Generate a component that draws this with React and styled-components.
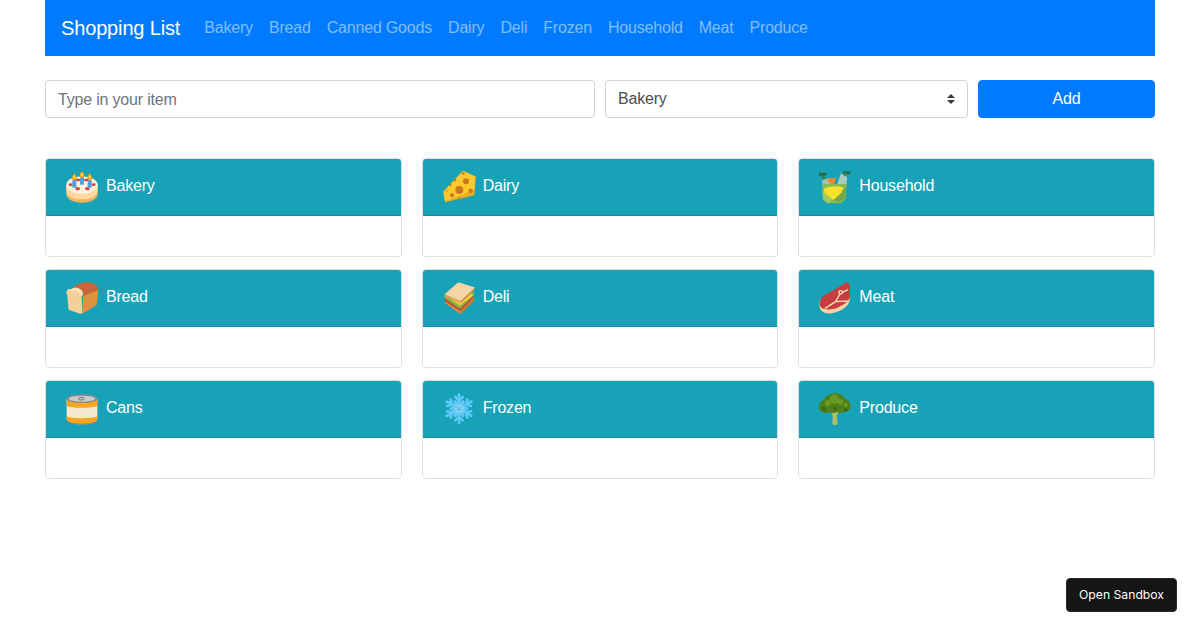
import React from 'react';
import styled, { createGlobalStyle } from 'styled-components';

const GlobalStyle = createGlobalStyle`
  * { box-sizing: border-box; }
  html, body { margin: 0; padding: 0; background: #fff; }
  body {
    font-family: "Liberation Sans", Arial, sans-serif;
    font-size: 16px;
    line-height: 1.5;
    letter-spacing: -0.19px;
    color: #212529;
  }
`;

const Container = styled.div`
  width: 1110px;
  margin: 0 auto;
`;

const Navbar = styled.nav`
  display: flex;
  align-items: center;
  height: 56px;
  padding: 8px 16px;
  background-color: #007bff;
`;

const Brand = styled.a`
  margin-right: 16px;
  font-size: 20px;
  line-height: 30px;
  letter-spacing: -0.15px;
  color: #fff;
`;

const NavLink = styled.a`
  padding: 8px;
  color: rgba(255, 255, 255, 0.5);
`;

const ItemForm = styled.form`
  display: grid;
  grid-template-columns: 550px 363px 177px;
  gap: 10px;
  margin-top: 24px;
`;

const fieldStyles = `
  height: 38px;
  border: 1px solid #ced4da;
  border-radius: 4px;
  font-family: inherit;
  font-size: 16px;
  line-height: 1.5;
  letter-spacing: inherit;
  color: #495057;
  background-color: #fff;
`;

const ItemInput = styled.input`
  ${fieldStyles}
  padding: 7px 12px 5px;
  &::placeholder { color: #6c757d; opacity: 1; }
`;

const CategorySelect = styled.select`
  ${fieldStyles}
  padding: 6px 28px 6px 12px;
  appearance: none;
  background: #fff url("data:image/svg+xml,%3csvg xmlns='http://www.w3.org/2000/svg' width='4' height='5' viewBox='0 0 4 5'%3e%3cpath fill='%23343a40' d='M2 0L0 2h4zm0 5L0 3h4z'/%3e%3c/svg%3e") no-repeat right 12px center / 8px 10px;
`;

const AddButton = styled.button`
  height: 38px;
  border: 1px solid #007bff;
  border-radius: 4px;
  background-color: #007bff;
  color: #fff;
  font-family: inherit;
  font-size: 16px;
  letter-spacing: inherit;
`;

const CardGrid = styled.div`
  display: grid;
  grid-template-columns: repeat(3, 1fr);
  grid-auto-flow: column;
  grid-template-rows: repeat(3, auto);
  column-gap: 20px;
  row-gap: 12px;
  margin-top: 40px;
`;

const Card = styled.section`
  border: 1px solid rgba(0, 0, 0, 0.125);
  border-radius: 4px;
  overflow: hidden;
`;

const CardHeader = styled.header`
  display: flex;
  align-items: center;
  height: 57px;
  padding: 11px 20px 13px;
  background-color: #17a2b8;
  border-bottom: 1px solid rgba(0, 0, 0, 0.125);
  color: #fff;
`;

const CardBody = styled.div`
  height: 40px;
  background: #fff;
`;

const IconBox = styled.svg`
  flex: none;
  display: block;
  width: 40px;
  height: 32px;
  margin-top: 2px;
  overflow: visible;
`;

const SandboxButton = styled.a`
  position: fixed;
  right: 23px;
  bottom: 18px;
  display: flex;
  align-items: center;
  justify-content: center;
  width: 111px;
  height: 34px;
  border: 1px solid #2a2a2a;
  border-radius: 4px;
  background: #151515;
  color: #fff;
  font-family: Inter, sans-serif;
  font-size: 12.2px;
  letter-spacing: 0;
`;

// emoji drawn in the coordinates of a 3x crop of the picture
const Cake = () => (
  <IconBox viewBox="63 63 120 96">
    <path d="M64 106v26c0 16 20 26 47 26s47-10 47-26v-26z" fill="#f7b55a" />
    <path d="M64 106v16c0 16 20 26 47 26s47-10 47-26v-16z" fill="#fdd8a2" />
    <ellipse cx="111" cy="105" rx="47" ry="26" fill="#fff1da" />
    <g fill="#d8404a">
      <ellipse cx="77" cy="104" rx="6" ry="4" />
      <ellipse cx="99" cy="90" rx="7" ry="4" />
      <ellipse cx="124" cy="90" rx="7" ry="4" />
      <ellipse cx="146" cy="104" rx="6" ry="4" />
      <ellipse cx="98" cy="116" rx="7" ry="5" />
      <ellipse cx="127" cy="116" rx="7" ry="5" />
    </g>
    <g fill="#4f9fe0">
      <rect x="82" y="90" width="12" height="23" rx="2" />
      <rect x="105" y="82" width="12" height="22" rx="2" />
      <rect x="128" y="90" width="12" height="23" rx="2" />
    </g>
    <g fill="#f59e0b">
      <path d="M88 70c5 6 8 11 7 16-1 5-13 5-14 0-1-5 3-10 7-16z" />
      <path d="M111 63c5 6 8 11 7 16-1 5-13 5-14 0-1-5 3-10 7-16z" />
      <path d="M134 70c5 6 8 11 7 16-1 5-13 5-14 0-1-5 3-10 7-16z" />
    </g>
    <g fill="#ffd54f">
      <ellipse cx="88" cy="81" rx="3.5" ry="5" />
      <ellipse cx="111" cy="74" rx="3.5" ry="5" />
      <ellipse cx="134" cy="81" rx="3.5" ry="5" />
    </g>
  </IconBox>
);

const Cheese = () => (
  <IconBox viewBox="39 33 120 96">
    <path d="M40 95L98 34q4-1 8 1l31 15-4 56-88 21z" fill="#f0ae1c" />
    <path d="M40 95L98 34q4-1 8 1l31 15-4 40-88 34z" fill="#f9c92e" />
    <g fill="#c9791c">
      <circle cx="88" cy="90" r="12" />
      <circle cx="108" cy="64" r="9" />
      <circle cx="122" cy="93" r="7" />
      <circle cx="66" cy="106" r="6" />
      <circle cx="75" cy="60" r="4" />
      <circle cx="61" cy="75" r="3.5" />
      <circle cx="50" cy="93" r="2.5" />
      <circle cx="100" cy="40" r="4" />
      <circle cx="88" cy="113" r="2.5" />
    </g>
  </IconBox>
);

const Groceries = () => (
  <IconBox viewBox="42 33 120 96">
    <path d="M54 40l20 34-10 4-18-34z" fill="#3b7d4f" />
    <path d="M42 38h22v9H42zM114 34h22v9h-22z" fill="#2a6a45" />
    <path d="M126 40l-16 36-10-4 18-36z" fill="#3b7d4f" />
    <path d="M52 60l20-6 14 24-34 6z" fill="#9fc4bb" />
    <path d="M94 80l14-40 18 12-2 30z" fill="#a9cbbd" />
    <path d="M66 56l28-3-12 32z" fill="#ef8a2b" />
    <path d="M52 72h72l-2 44-14 14H68l-14-12z" fill="#86ba4e" />
    <path d="M68 130l-14-12-2-30 32 30z" fill="#a2cc5c" />
    <path d="M56 88c8-10 54-12 60-4l-6 14-24 22-26-20z" fill="#f8e02c" />
    <path d="M86 120l24-22 6-14 6 4-4 26-12 12z" fill="#72a648" />
  </IconBox>
);

const Bread = () => (
  <IconBox viewBox="33 21 120 96">
    <path d="M50 42C60 28 85 20 100 22c18 2 32 12 30 26l-45 20z" fill="#c4673a" />
    <path d="M84 64l46-18-5 44-43 26z" fill="#dc933e" />
    <path d="M50 42c10-8 24-3 31 6 4 6 3 12-1 16l2 46c0 5-3 7-7 6l-30-10c-4-2-5-4-5-8l-3-38c-5-5-4-13 3-18z" fill="#f3d09a" />
    <path d="M50 42c10-8 24-3 31 6 4 6 3 12-1 16-6-10-18-20-33-16z" fill="#f9e2bb" />
    <ellipse cx="95" cy="31" rx="8" ry="2.5" fill="#e4503f" />
  </IconBox>
);

const Sandwich = () => (
  <IconBox viewBox="39 21 120 96">
    <path d="M46 84l44 33 42-40v-12L46 76z" fill="#e08d39" />
    <path d="M90 104l42-40v13l-42 40z" fill="#cc7a2b" />
    <path d="M44 78l46 30 42-42-84 2z" fill="#b94a3d" />
    <path d="M42 68l48 34 44-44-4-6-86 6z" fill="#84b53f" />
    <path d="M58 70l32 22 20-16-26-14z" fill="#f7c93c" />
    <path d="M104 72l20-16 6 4-20 18z" fill="#f7c93c" />
    <path d="M44 58l38-34q4-2 8-1l43 14c1 1 1 2 0 3L92 78z" fill="#f5d5a6" />
    <path d="M44 58l48 20v7L44 64z" fill="#dfa262" />
    <path d="M92 78l41-38v6L92 85z" fill="#d5934f" />
  </IconBox>
);

const Steak = () => (
  <IconBox viewBox="42 21 120 96">
    <path d="M43 90c0-4 1-10 3-14l89-8c0 20-16 34-42 44-24 8-50 2-50-22z" fill="#fad3a6" />
    <path d="M44 88c0-14 10-26 24-33 20-10 36-20 52-31 8-4 15 1 15 12v30c-3 12-18 24-40 33-22 8-51 6-51-11z" fill="#c43f3d" />
    <path d="M60 100l32-20 13-24 24-12M92 80l36-2" fill="none" stroke="#f8dcc0" strokeWidth="4" />
    <circle cx="107" cy="52" r="7" fill="#f8dcc0" />
    <circle cx="107" cy="52" r="3" fill="#b9393a" />
  </IconBox>
);

const TinCan = () => (
  <IconBox viewBox="33 24 120 96">
    <path d="M35 42h92v60c0 10-19 16-46 16s-46-6-46-16z" fill="#f4e8cf" />
    <path d="M35 42h92v20c-14 8-78 8-92 0z" fill="#f8a51f" />
    <path d="M35 94c16 8 76 8 92 0v8c0 10-19 16-46 16s-46-6-46-16z" fill="#f8a51f" />
    <path d="M35 102c2 10 19 14 46 14s44-4 46-14v4c0 8-19 13-46 13s-46-5-46-13z" fill="#84807a" />
    <ellipse cx="81" cy="41" rx="46" ry="13" fill="#86888c" />
    <ellipse cx="81" cy="41" rx="39" ry="9" fill="#c9cbce" />
    <ellipse cx="79" cy="41" rx="8" ry="4" fill="none" stroke="#6b6d70" strokeWidth="3" />
  </IconBox>
);

const armAngles = [0, 60, 120, 180, 240, 300];

const Snowflake = () => (
  <IconBox viewBox="39 24 120 96">
    <g fill="none" stroke="#5cc8f5" strokeWidth="8" strokeLinecap="round">
      {armAngles.map((a) => (
        <g key={a} transform={`rotate(${a} 87 71)`}>
          <path d="M87 71V28M76 36l11 11 11-11" />
          <path d="M87 58l-12-8M87 58l12-8" />
        </g>
      ))}
    </g>
    <path d="M87 55l14 8v16l-14 8-14-8V63z" fill="#8ad8f7" />
    <path d="M87 55v32M73 63l28 16M101 63L73 79" stroke="#4aa8dc" strokeWidth="2" />
  </IconBox>
);

const Broccoli = () => (
  <IconBox viewBox="42 24 120 96">
    <path d="M74 72h28l-6 20 2 24c-2 5-14 5-16 0l1-24z" fill="#a8c262" />
    <path d="M42 66c0-11 7-18 14-20 6-13 20-21 34-21 14 0 25 7 31 17 10 3 16 11 16 22 0 10-8 17-18 16-6 5-16 5-22 0-8 5-18 5-24 0-6 5-16 5-22 0-6 0-9-6-9-14z" fill="#4f7f18" />
    <g fill="#6c9a24">
      <circle cx="88" cy="42" r="14" />
      <circle cx="106" cy="50" r="9" />
      <circle cx="68" cy="54" r="9" />
      <circle cx="122" cy="60" r="6" />
    </g>
    <g fill="#3f6c14">
      <circle cx="56" cy="72" r="6" />
      <circle cx="122" cy="74" r="6" />
      <circle cx="90" cy="72" r="6" />
    </g>
  </IconBox>
);

const categories = [
  { name: 'Bakery', Icon: Cake },
  { name: 'Bread', Icon: Bread },
  { name: 'Cans', Icon: TinCan },
  { name: 'Dairy', Icon: Cheese },
  { name: 'Deli', Icon: Sandwich },
  { name: 'Frozen', Icon: Snowflake },
  { name: 'Household', Icon: Groceries },
  { name: 'Meat', Icon: Steak },
  { name: 'Produce', Icon: Broccoli },
];

const navItems = ['Bakery', 'Bread', 'Canned Goods', 'Dairy', 'Deli', 'Frozen', 'Household', 'Meat', 'Produce'];

export default function App() {
  return (
    <Container>
      <GlobalStyle />
      <Navbar>
        <Brand>Shopping List</Brand>
        {navItems.map((item) => (
          <NavLink key={item}>{item}</NavLink>
        ))}
      </Navbar>
      <ItemForm>
        <ItemInput placeholder="Type in your item" />
        <CategorySelect defaultValue="Bakery">
          {navItems.map((item) => (
            <option key={item}>{item}</option>
          ))}
        </CategorySelect>
        <AddButton type="button">Add</AddButton>
      </ItemForm>
      <CardGrid>
        {categories.map(({ name, Icon }) => (
          <Card key={name}>
            <CardHeader>
              <Icon />
              {name}
            </CardHeader>
            <CardBody />
          </Card>
        ))}
      </CardGrid>
      <SandboxButton>Open Sandbox</SandboxButton>
    </Container>
  );
}
